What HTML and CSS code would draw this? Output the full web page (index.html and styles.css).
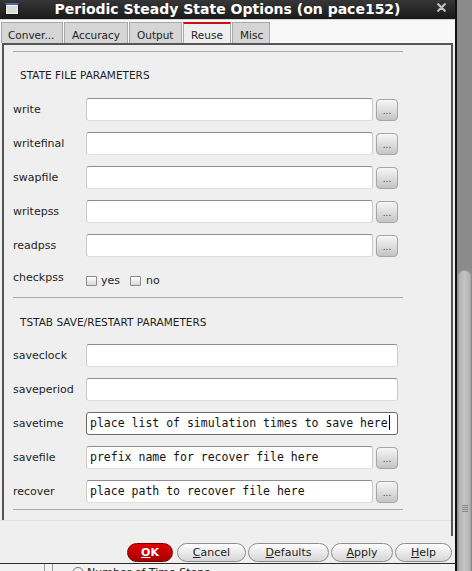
FILE: index.html
```html
<!DOCTYPE html>
<html>
<head>
<meta charset="utf-8">
<link rel="stylesheet" href="styles.css">
</head>
<body>
<div class="screen">
  <div class="dialog">
    <div class="titlebar">
      <span class="winicon"></span>
      <span class="title">Periodic Steady State Options (on pace152)</span>
      <svg class="close" width="9" height="9" viewBox="0 0 9 9"><path d="M1.2 1.2L7.8 7.8M7.8 1.2L1.2 7.8" stroke="#c2c2c2" stroke-width="2.2" stroke-linecap="round"/></svg>
    </div>
    <div class="tabs">
      <div class="tab t-conv">Conver...</div>
      <div class="tab t-acc">Accuracy</div>
      <div class="tab t-out">Output</div>
      <div class="tab t-reuse active">Reuse</div>
      <div class="tab t-misc">Misc</div>
    </div>
    <div class="panel">
      <div class="sep"></div>
      <div class="heading">STATE FILE PARAMETERS</div>
      <div class="form">
        <label>write</label><div class="field"></div><div class="browse">...</div>
        <label>writefinal</label><div class="field"></div><div class="browse">...</div>
        <label>swapfile</label><div class="field"></div><div class="browse">...</div>
        <label>writepss</label><div class="field"></div><div class="browse">...</div>
        <label>readpss</label><div class="field"></div><div class="browse">...</div>
        <label class="chk-label">checkpss</label>
        <div class="checks">
          <span class="box"></span><span class="opt">yes</span>
          <span class="box box2"></span><span class="opt opt2">no</span>
        </div>
      </div>
      <div class="sep sep-mid"></div>
      <div class="heading heading2">TSTAB SAVE/RESTART PARAMETERS</div>
      <div class="form form2">
        <label>saveclock</label><div class="field wide"></div>
        <label>saveperiod</label><div class="field wide"></div>
        <label>savetime</label><div class="field wide focus">place list of simulation times to save here<span class="caret"></span></div>
        <label>savefile</label><div class="field">prefix name for recover file here</div><div class="browse">...</div>
        <label>recover</label><div class="field">place path to recover file here</div><div class="browse">...</div>
      </div>
      <div class="sep sep-mid"></div>
    </div>
    <div class="footer">
      <div class="btn ok"><u>O</u>K</div>
      <div class="btn cancel"><u>C</u>ancel</div>
      <div class="btn defaults"><u>D</u>efaults</div>
      <div class="btn apply"><u>A</u>pply</div>
      <div class="btn help"><u>H</u>elp</div>
    </div>
    <div class="behind">
      <span class="bcol"></span>
      <span class="bcol2"></span>
      <span class="radio"></span>
      <span class="btext">Number of Time Steps</span>
    </div>
  </div>
  <div class="scroll">
    <div class="thumb"><span class="grip"></span></div>
  </div>
</div>
</body>
</html>
```

FILE: styles.css
```css
html, body {
  margin: 0;
  padding: 0;
}

body {
  width: 472px;
  height: 571px;
  overflow: hidden;
  background: #8b8b8b;
  font-family: "DejaVu Sans", sans-serif;
}

.screen {
  display: flex;
  height: 571px;
}

.dialog {
  width: 455px;
  border-right: 2px solid #111;
  background: #efefef;
  display: flex;
  flex-direction: column;
}

/* title bar */
.titlebar {
  height: 19px;
  flex: none;
  background: linear-gradient(#363636, #1a1a1a);
  display: flex;
  align-items: center;
  padding: 0 9px 0 5px;
}

.winicon {
  width: 12px;
  height: 9px;
  border: 1px solid #151515;
  border-top: 2px solid #4b68aa;
  background: #dcdcd5;
  box-shadow: inset 0 0 0 1px #f2f2f2;
  margin-top: -2px;
}

.title {
  flex: 1;
  text-align: center;
  color: #fff;
  font-weight: bold;
  font-size: 14px;
  line-height: 19px;
  white-space: nowrap;
  margin-right: 1px;
}

.close {
  display: block;
  margin-top: -4px;
}

/* tabs */
.tabs {
  height: 24px;
  flex: none;
  box-sizing: border-box;
  background: #f8f8f8;
  border-top: 1px solid #d2d2d2;
  display: flex;
  align-items: flex-end;
  gap: 1px;
  padding-left: 1px;
}

.tab {
  height: 21px;
  box-sizing: border-box;
  background: #d5d5d5;
  border: 1px solid #a9a9a9;
  border-bottom: none;
  font-size: 10.5px;
  line-height: 13px;
  padding: 6px 0 0 7px;
  color: #222;
  white-space: nowrap;
}

.t-conv { width: 62px; padding-left: 6px; }
.t-acc { width: 64px; }
.t-out { width: 53px; }
.t-reuse { width: 48px; }
.t-misc { width: 38px; }

.tab.active {
  background: #efefef;
  border-top: 2px solid #cc1111;
  padding-top: 5px;
}

/* panel */
.panel {
  margin: 0 2px;
  border: 2px solid #555;
  border-bottom: none;
  padding: 6px 0 10px 9px;
  position: relative;
}

.panel::after {
  content: "";
  position: absolute;
  right: -2px;
  top: 100%;
  width: 2px;
  height: 16px;
  background: #555;
}

.sep {
  width: 390px;
  height: 1px;
  background: #ababab;
}

.sep-mid {
  margin-top: 6px;
}

.heading {
  font-size: 10.5px;
  line-height: 14px;
  margin-top: 16px;
  padding-left: 7px;
  color: #1e1e1e;
}

.heading2 {
  margin-top: 17px;
}

.form {
  display: grid;
  grid-template-columns: 70px 287px 22px;
  column-gap: 3px;
  row-gap: 11px;
  grid-auto-rows: 23px;
  margin-top: 16px;
}

.form2 {
  margin-top: 15px;
}

label {
  font-size: 11px;
  line-height: 23px;
  color: #1e1e1e;
  white-space: nowrap;
}

.field {
  background: #fff;
  border: 1px solid;
  border-color: #8e8e8e #cbcbcb #dedede #cbcbcb;
  border-radius: 3px;
  box-sizing: border-box;
  font-family: "DejaVu Sans Mono", monospace;
  font-size: 11.5px;
  line-height: 21px;
  padding-left: 3px;
  color: #111;
  white-space: nowrap;
  overflow: hidden;
}

.field.wide {
  grid-column: 2 / 4;
}

.field.focus {
  border-color: #6a6a6a;
}

.caret {
  display: inline-block;
  width: 1px;
  height: 15px;
  background: #000;
  vertical-align: middle;
  margin-left: 1px;
  margin-top: -2px;
}

.browse {
  height: 22px;
  margin-top: 1px;
  box-sizing: border-box;
  border: 1px solid #a6a6a6;
  border-radius: 4px;
  background: linear-gradient(#f7f7f7, #c4c4c4);
  font-size: 9px;
  text-align: center;
  line-height: 22px;
  color: #333;
}

.chk-label {
  line-height: 14px;
  padding-top: 3px;
  align-self: start;
}

.checks {
  grid-column: 2 / 4;
  display: flex;
  align-items: center;
  align-self: start;
  padding-top: 6px;
  font-size: 11px;
  line-height: 14px;
  color: #1e1e1e;
}

.box {
  width: 9px;
  height: 8px;
  border: 1px solid #8a8a8a;
  border-radius: 1px;
  background: linear-gradient(#ffffff, #d8d8d8);
  margin-right: 4px;
}

.box2 {
  margin-left: 10px;
  margin-right: 5px;
}

/* footer */
.footer {
  height: 43px;
  flex: none;
  box-sizing: border-box;
  border-top: 1px solid #e2e2e2;
  display: flex;
  justify-content: flex-end;
  align-items: flex-end;
  gap: 2px;
  padding: 0 3px 1px 0;
}

.btn {
  height: 19px;
  box-sizing: border-box;
  border: 1px solid #8e8e8e;
  border-radius: 10px;
  background: linear-gradient(#fefefe, #d6d6d6);
  font-size: 11px;
  line-height: 17px;
  text-align: center;
  color: #222;
}

.ok {
  width: 46px;
  margin-right: 2px;
  background: linear-gradient(#e20000, #a50000);
  border-color: #7a0000;
  color: #fff;
  font-weight: bold;
}

.cancel { width: 69px; }
.defaults { width: 81px; }
.apply { width: 62px; }
.help { width: 57px; }

/* window behind */
.behind {
  height: 8px;
  flex: none;
  border-top: 1px solid #2c2c2c;
  background: #f2f2f2;
  display: flex;
  overflow: hidden;
}

.bcol {
  width: 44px;
  border-right: 1px solid #9a9a9a;
}

.bcol2 {
  width: 7px;
  border-right: 1px solid #9a9a9a;
}

.radio {
  width: 10px;
  height: 10px;
  border: 1px solid #777;
  border-radius: 50%;
  margin: 3px 0 0 19px;
  flex: none;
}

.btext {
  margin-left: 3px;
  font-size: 11px;
  line-height: 14px;
  margin-top: 2px;
  color: #222;
  white-space: nowrap;
}

/* scrollbar of the window behind */
.scroll {
  width: 15px;
  background: #8b8b8b;
}

.thumb {
  margin: 270px 1px 0 1px;
  height: 310px;
  box-sizing: border-box;
  background: linear-gradient(90deg, #b3b3b3, #c3c3c3, #b3b3b3);
  border: 1px solid #a3a3a3;
  border-radius: 6px 6px 0 0;
  padding-top: 234px;
  display: flex;
  flex-direction: column;
  align-items: center;
}

.grip {
  width: 6px;
  height: 8px;
  background: repeating-linear-gradient(#888 0 1px, transparent 1px 2px);
}
```
